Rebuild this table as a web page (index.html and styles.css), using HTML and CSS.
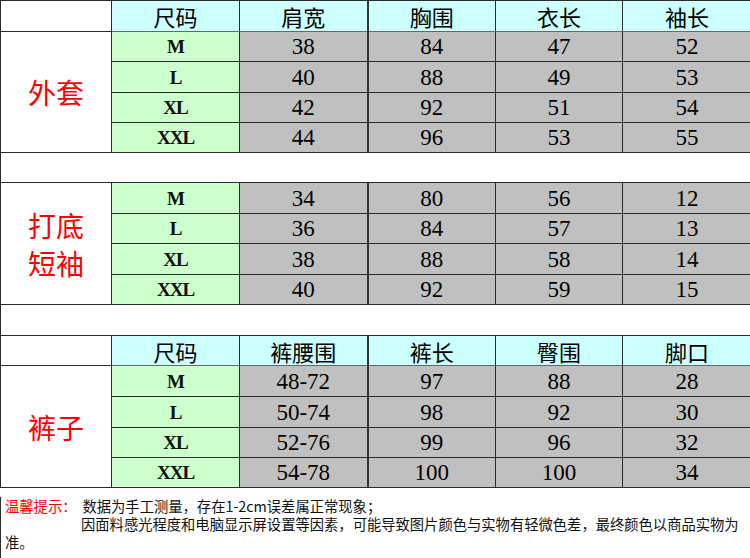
FILE: index.html
```html
<!DOCTYPE html>
<html lang="zh">
<head>
<meta charset="utf-8">
<title>尺码表</title>
<link rel="stylesheet" href="styles.css">
</head>
<body>
<table class="sizes">
  <colgroup>
    <col class="c0"><col class="c1"><col class="c2"><col class="c3"><col class="c4"><col class="c5">
  </colgroup>
  <tr class="h31">
    <td class="blank"></td>
    <th class="head">尺码</th><th class="head">肩宽</th><th class="head thick">胸围</th><th class="head">衣长</th><th class="head">袖长</th>
  </tr>
  <tr class="h30">
    <td class="cat" rowspan="4">外套</td>
    <td class="size">M</td><td class="num">38</td><td class="num thick">84</td><td class="num">47</td><td class="num">52</td>
  </tr>
  <tr class="h31"><td class="size">L</td><td class="num">40</td><td class="num thick">88</td><td class="num">49</td><td class="num">53</td></tr>
  <tr class="h30"><td class="size">XL</td><td class="num">42</td><td class="num thick">92</td><td class="num">51</td><td class="num">54</td></tr>
  <tr class="h30"><td class="size">XXL</td><td class="num">44</td><td class="num thick">96</td><td class="num">53</td><td class="num">55</td></tr>
  <tr class="h30"><td class="gap" colspan="6"></td></tr>
  <tr class="h31">
    <td class="cat" rowspan="4">打底<br>短袖</td>
    <td class="size">M</td><td class="num">34</td><td class="num thick">80</td><td class="num">56</td><td class="num">12</td>
  </tr>
  <tr class="h30"><td class="size">L</td><td class="num">36</td><td class="num thick">84</td><td class="num">57</td><td class="num">13</td></tr>
  <tr class="h31"><td class="size">XL</td><td class="num">38</td><td class="num thick">88</td><td class="num">58</td><td class="num">14</td></tr>
  <tr class="h30"><td class="size">XXL</td><td class="num">40</td><td class="num thick">92</td><td class="num">59</td><td class="num">15</td></tr>
  <tr class="h31"><td class="gap" colspan="6"></td></tr>
  <tr class="h30">
    <td class="blank"></td>
    <th class="head">尺码</th><th class="head">裤腰围</th><th class="head thick">裤长</th><th class="head">臀围</th><th class="head">脚口</th>
  </tr>
  <tr class="h31">
    <td class="cat" rowspan="4">裤子</td>
    <td class="size">M</td><td class="num">48-72</td><td class="num thick">97</td><td class="num">88</td><td class="num">28</td>
  </tr>
  <tr class="h31"><td class="size">L</td><td class="num">50-74</td><td class="num thick">98</td><td class="num">92</td><td class="num">30</td></tr>
  <tr class="h30"><td class="size">XL</td><td class="num">52-76</td><td class="num thick">99</td><td class="num">96</td><td class="num">32</td></tr>
  <tr class="h30"><td class="size">XXL</td><td class="num">54-78</td><td class="num thick">100</td><td class="num">100</td><td class="num">34</td></tr>
</table>
<div class="note">
  <p class="line first"><span class="tip">温馨提示：</span><span class="msg">数据为手工测量，存在1-2cm误差属正常现象；</span></p>
  <p class="line indent">因面料感光程度和电脑显示屏设置等因素，可能导致图片颜色与实物有轻微色差，最终颜色以商品实物为</p>
  <p class="line last">准。</p>
</div>
</body>
</html>
```
FILE: styles.css
```css
html, body {
  margin: 0;
  padding: 0;
  background: #ffffff;
}
body {
  width: 750px;
  overflow: hidden;
  font-family: "Noto Sans CJK SC", sans-serif;
}
.sizes {
  border-collapse: collapse;
  table-layout: fixed;
  width: 751px;
}
.c0 { width: 111px; }
.c1 { width: 128px; }
.c2 { width: 128px; }
.c3 { width: 128px; }
.c4 { width: 127px; }
.c5 { width: 129px; }
.h30 { height: 30px; }
.h31 { height: 31px; }
.sizes td, .sizes th {
  border: 1px solid #2b2b2b;
  padding: 0;
  text-align: center;
  vertical-align: middle;
  line-height: 1;
  overflow: hidden;
  white-space: nowrap;
}
.sizes .thick { border-left: 2px solid #333333; }
.blank { background: #ffffff; }
.gap { background: #ffffff; border-left: 1px solid #2b2b2b; border-right: 0; }
.head {
  background: #ccffff;
  font-family: "Noto Sans CJK SC", sans-serif;
  font-weight: 400;
  font-size: 22px;
  color: #000000;
  border-bottom-color: #666666 !important;
}
.size {
  background: #ccffcc;
  font-family: "Liberation Serif", serif;
  font-weight: 700;
  font-size: 19px;
  letter-spacing: -1px;
  color: #111111;
}
.num {
  background: #c0c0c0;
  font-family: "Liberation Serif", serif;
  font-size: 23px;
  color: #000000;
}
.cat {
  background: #ffffff;
  color: #ff0000;
  font-family: "Noto Sans CJK SC", sans-serif;
  font-size: 28px;
  line-height: 38px !important;
  white-space: normal !important;
}
.note {
  height: 69px;
  border-left: 1px solid #2b2b2b;
  border-bottom: 1px solid #2b2b2b;
  box-sizing: border-box;
  font-size: 14.3px;
  color: #111111;
}
.line {
  margin: 0;
  height: 18px;
  line-height: 18px;
  white-space: nowrap;
}
.first { margin-top: 9px; padding-left: 4px; }
.tip { color: #ff0000; }
.msg { margin-left: 6px; }
.indent { padding-left: 80px; }
.last { padding-left: 4px; }
```
